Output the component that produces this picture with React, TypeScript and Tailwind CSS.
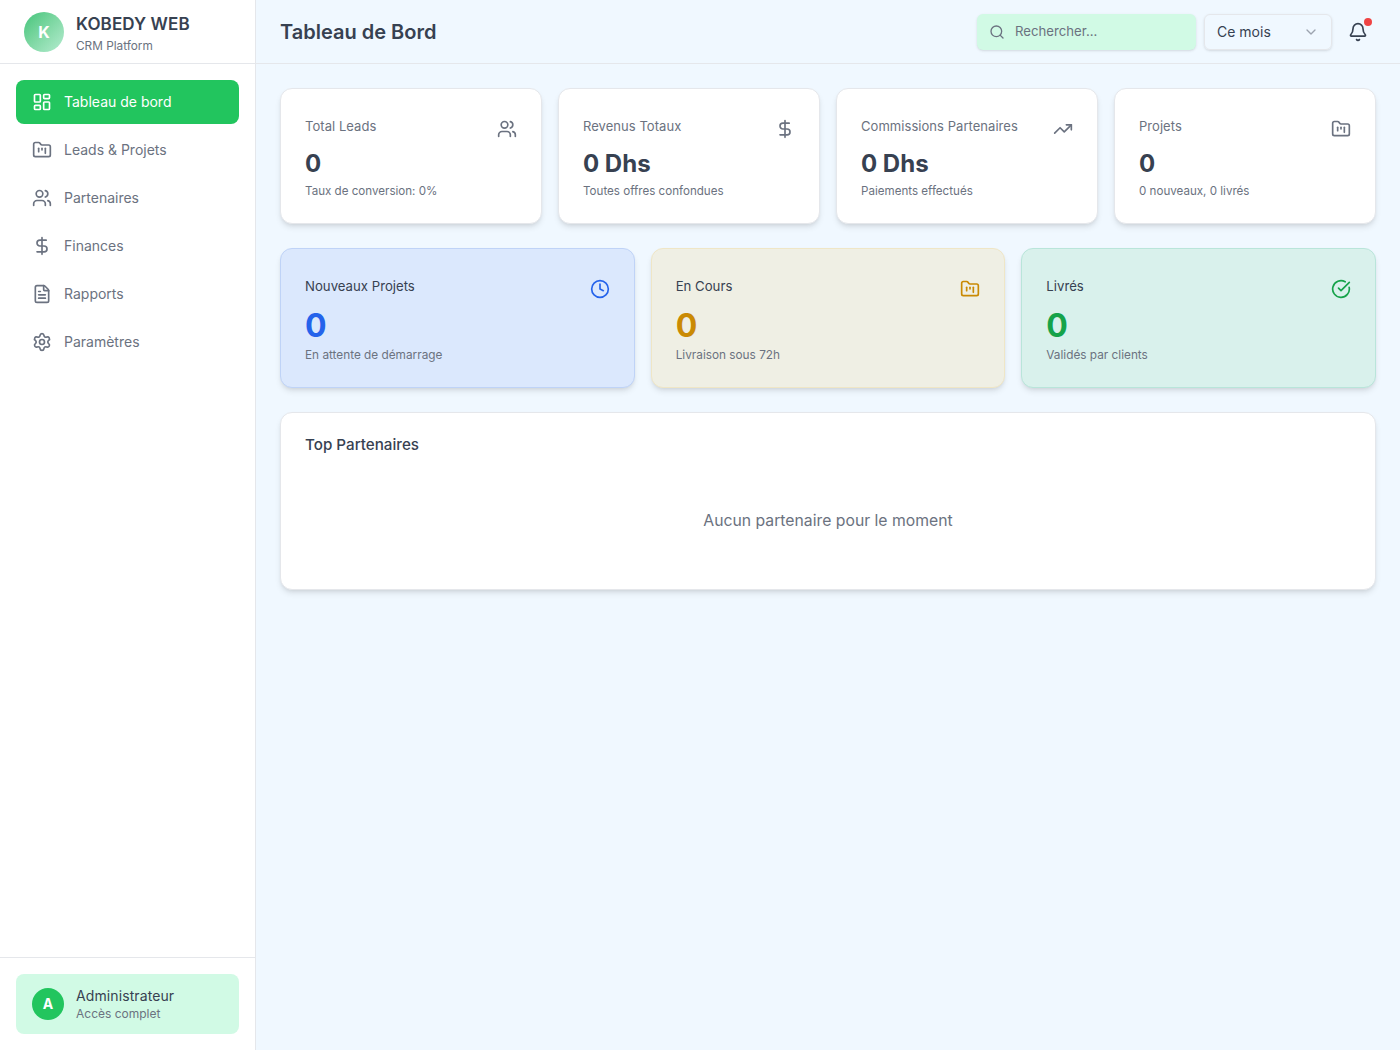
import {
  Bell,
  CircleCheckBig,
  ChevronDown,
  Clock,
  DollarSign,
  FileText,
  FolderKanban,
  LayoutDashboard,
  Search,
  Settings,
  TrendingUp,
  Users,
} from 'lucide-react';

const navItems = [
  { label: 'Tableau de bord', icon: LayoutDashboard, active: true },
  { label: 'Leads & Projets', icon: FolderKanban },
  { label: 'Partenaires', icon: Users },
  { label: 'Finances', icon: DollarSign },
  { label: 'Rapports', icon: FileText },
  { label: 'Paramètres', icon: Settings },
];

const statCards = [
  { title: 'Total Leads', value: '0', note: 'Taux de conversion: 0%', icon: Users },
  { title: 'Revenus Totaux', value: '0 Dhs', note: 'Toutes offres confondues', icon: DollarSign },
  { title: 'Commissions Partenaires', value: '0 Dhs', note: 'Paiements effectués', icon: TrendingUp },
  { title: 'Projets', value: '0', note: '0 nouveaux, 0 livrés', icon: FolderKanban },
];

const statusCards = [
  {
    title: 'Nouveaux Projets',
    note: 'En attente de démarrage',
    icon: Clock,
    card: 'bg-[#dbe8fd] border-[#bfd3f7]',
    accent: 'text-[#2563eb]',
  },
  {
    title: 'En Cours',
    note: 'Livraison sous 72h',
    icon: FolderKanban,
    card: 'bg-[#efefe4] border-[#efe6c6]',
    accent: 'text-[#ca8a04]',
  },
  {
    title: 'Livrés',
    note: 'Validés par clients',
    icon: CircleCheckBig,
    card: 'bg-[#d9f1ec] border-[#b9e5da]',
    accent: 'text-[#16a34a]',
  },
];

const App = () => {
  return (
    <div className="flex h-[1050px] bg-[#f0f8ff] font-['Inter','Liberation_Sans',sans-serif] text-[#374151] overflow-hidden">
      <aside className="w-64 shrink-0 flex flex-col bg-white border-r border-[#e5e7eb]">
        <div className="h-16 shrink-0 flex items-center gap-3 px-6 border-b border-[#e5e7eb]">
          <div className="w-10 h-10 rounded-full bg-gradient-to-br from-[#3fc47a] to-[#b4ecd0] flex items-center justify-center text-white font-bold text-base">
            K
          </div>
          <div className="pt-0.5">
            <div className="text-[17px] leading-6 font-semibold tracking-[0.1px]">KOBEDY WEB</div>
            <div className="text-[11.8px] leading-4 mt-0.5 text-[#6b7280]">CRM Platform</div>
          </div>
        </div>

        <nav className="flex-1 p-4 flex flex-col gap-1">
          {navItems.map(({ label, icon: Icon, active }) => (
            <div
              key={label}
              className={`h-11 rounded-lg px-4 flex items-center gap-3 text-sm ${
                active ? 'bg-[#22c55e] text-white' : 'text-[#6b7280]'
              }`}
            >
              <Icon className="w-5 h-5 shrink-0" />
              <span>{label}</span>
            </div>
          ))}
        </nav>

        <div className="p-4 border-t border-[#e5e7eb]">
          <div className="h-[60px] rounded-lg bg-[#d1fae5] px-4 flex items-center gap-3">
            <div className="w-8 h-8 rounded-full bg-[#22c55e] flex items-center justify-center text-white text-sm font-bold">
              A
            </div>
            <div>
              <div className="text-sm leading-5 tracking-[0.1px]">Administrateur</div>
              <div className="text-xs leading-4 text-[#6b7280]">Accès complet</div>
            </div>
          </div>
        </div>
      </aside>

      <div className="flex-1 min-w-0 flex flex-col">
        <header className="h-16 shrink-0 flex items-center justify-between px-6 border-b border-[#e5e7eb]">
          <h1 className="text-xl font-semibold">Tableau de Bord</h1>
          <div className="flex items-center gap-2">
            <div className="w-[219px] h-9 rounded-md bg-[#d1fae5] shadow-sm flex items-center gap-2.5 pl-3 text-[13.2px] text-[#6b7280]">
              <Search className="w-4 h-4 shrink-0" />
              <span>Rechercher...</span>
            </div>
            <div className="w-32 h-9 rounded-md border border-[#e5e7eb] shadow-sm flex items-center justify-between px-3 text-sm">
              <span>Ce mois</span>
              <ChevronDown className="w-4 h-4 text-[#9ca3af]" />
            </div>
            <div className="relative w-9 h-9 flex items-center justify-center">
              <Bell className="w-5 h-5" />
              <span className="absolute top-1 right-1 w-2 h-2 rounded-full bg-[#ef4444]" />
            </div>
          </div>
        </header>

        <main className="flex-1 p-6 flex flex-col gap-6">
          <div className="grid grid-cols-4 gap-4">
            {statCards.map(({ title, value, note, icon: Icon }) => (
              <div key={title} className="h-[136px] rounded-xl bg-white border border-[#e5e7eb] shadow-md p-6">
                <div className="flex items-start justify-between">
                  <div className="text-[13px] tracking-[0.05px] text-[#6b7280] leading-5 mt-[3px]">{title}</div>
                  <Icon className="w-5 h-5 text-[#6b7280] mt-[6px]" />
                </div>
                <div className="text-2xl font-bold leading-8 mt-[9px]">{value}</div>
                <div className="text-[11.6px] leading-4 text-[#6b7280] mt-[3px]">{note}</div>
              </div>
            ))}
          </div>

          <div className="grid grid-cols-3 gap-4">
            {statusCards.map(({ title, note, icon: Icon, card, accent }) => (
              <div key={title} className={`h-[140px] rounded-xl border shadow-md p-6 ${card}`}>
                <div className="flex items-start justify-between">
                  <div className="text-[13.2px] leading-5 mt-[3px]">{title}</div>
                  <Icon className={`w-5 h-5 mt-[6px] ${accent}`} />
                </div>
                <div className={`text-[32px] font-bold leading-9 mt-[9px] ${accent}`}>0</div>
                <div className="text-[11.8px] leading-4 text-[#6b7280] mt-[3px]">{note}</div>
              </div>
            ))}
          </div>

          <div className="h-[178px] rounded-xl bg-white border border-[#e5e7eb] shadow-md p-6">
            <h2 className="text-[15.2px] font-medium leading-5 mt-[-2px]">Top Partenaires</h2>
            <div className="text-center text-[#6b7280] text-[15.75px] mt-[54px]">Aucun partenaire pour le moment</div>
          </div>
        </main>
      </div>
    </div>
  );
};

export default App;
